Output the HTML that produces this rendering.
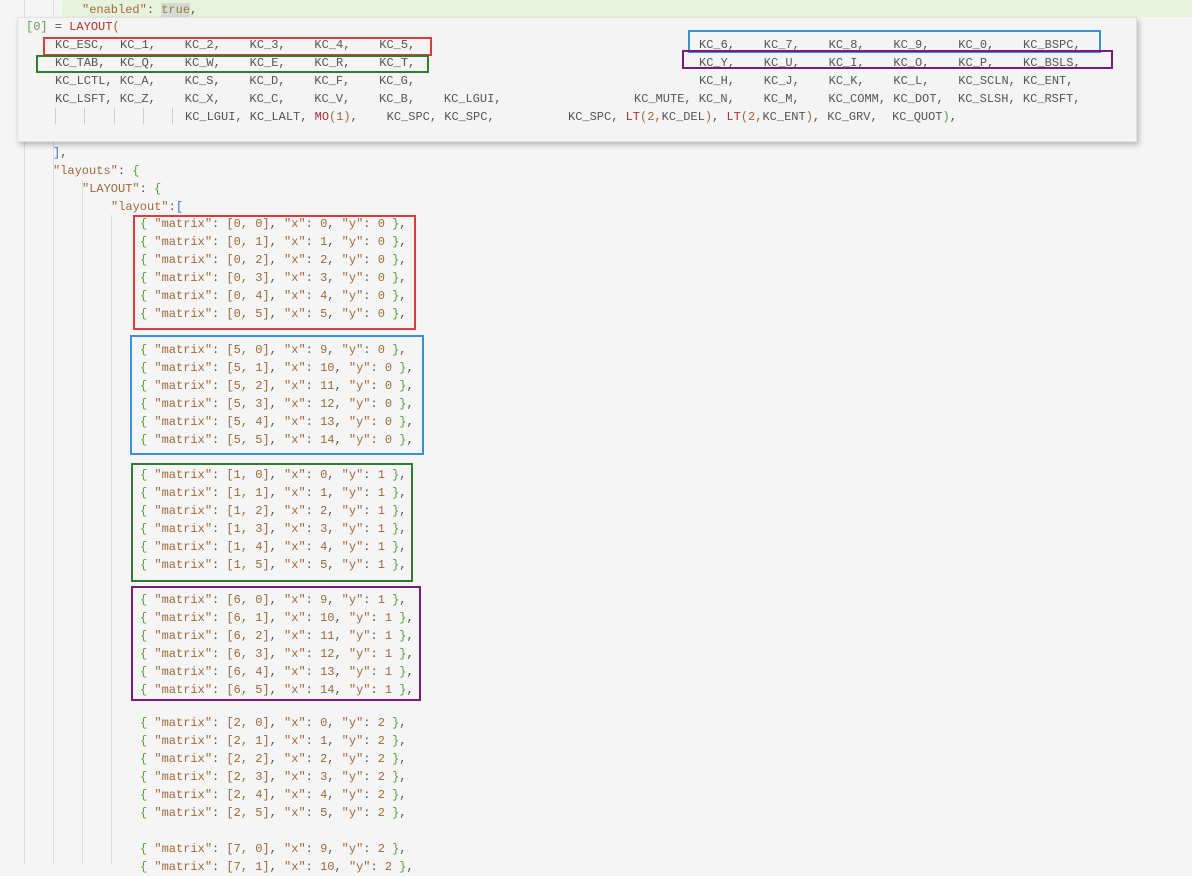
<!DOCTYPE html>
<html><head><meta charset="utf-8"><style>
*{margin:0;padding:0;box-sizing:border-box}
body{width:1192px;height:864px;background:#f5f5f5;position:relative;overflow:hidden;font-family:"Liberation Mono",monospace;}
.t{position:absolute;white-space:pre;font-size:12px;line-height:18px;color:#555}
.p{position:absolute;white-space:pre;font-size:12px;line-height:18px;color:#555}
.g{position:absolute;width:1px;background:#dcdcdc}
.s{color:#a0683a}.n{color:#9a6a3a}.b{color:#5b9a3c}.r{color:#b0302a}.bl{color:#3a6ad0}
.box{position:absolute;border:2.5px solid}
</style></head><body>
<div style="position:absolute;left:62px;top:0;width:1130px;height:17px;background:#e6f2dc"></div>
<div class="g" style="left:24px;top:0;height:864px"></div>
<div class="g" style="left:53px;top:0;height:864px"></div>
<div class="g" style="left:82px;top:180px;height:684px"></div>
<div class="g" style="left:111px;top:215px;height:649px"></div>
<div class="t" style="left:82px;top:1px"><span class="s">"enabled"</span>: <span style="background:#d8dcd0;color:#8a7a4a">true</span>,</div>
<div class="t" style="left:53px;top:144px"><span class="bl">]</span>,</div>
<div class="t" style="left:53px;top:162px"><span class="s">"layouts"</span>: <span class="b">{</span></div>
<div class="t" style="left:82px;top:180px"><span class="s">"LAYOUT"</span>: <span class="b">{</span></div>
<div class="t" style="left:111px;top:198px"><span class="s">"layout"</span>:<span class="bl">[</span></div>

<div style="position:absolute;left:17px;top:17px;width:1120px;height:125px;background:#f4f4f4;border:1px solid #e2e2e2;box-shadow:2px 3px 5px rgba(0,0,0,0.25)"></div>
<div class="g" style="left:55px;top:108px;height:16px;background:#ccc"></div>
<div class="g" style="left:84px;top:108px;height:16px;background:#ccc"></div>
<div class="g" style="left:114px;top:108px;height:16px;background:#ccc"></div>
<div class="g" style="left:143px;top:108px;height:16px;background:#ccc"></div>
<div class="g" style="left:172px;top:108px;height:16px;background:#ccc"></div>
<div class="p" style="left:26px;top:18px"><span style="color:#6a9a5a">[0]</span> = <span class="r">LAYOUT</span><span class="s">(</span></div>
<div class="p" style="left:55px;top:36px">KC_ESC,</div><div class="p" style="left:120px;top:36px">KC_1,    KC_2,    KC_3,    KC_4,    KC_5,</div>
<div class="p" style="left:55px;top:54px">KC_TAB,</div><div class="p" style="left:120px;top:54px">KC_Q,    KC_W,    KC_E,    KC_R,    KC_T,</div>
<div class="p" style="left:55px;top:72px">KC_LCTL, KC_A,    KC_S,    KC_D,    KC_F,    KC_G,</div>
<div class="p" style="left:55px;top:90px">KC_LSFT, KC_Z,    KC_X,    KC_C,    KC_V,    KC_B,    KC_LGUI,</div>
<div class="p" style="left:185px;top:108px">KC_LGUI, KC_LALT, <span class="r">MO</span><span class="s">(1)</span>,    KC_SPC, KC_SPC,</div>
<div class="p" style="left:699px;top:36px">KC_6,    KC_7,    KC_8,    KC_9,    KC_0,    KC_BSPC,</div>
<div class="p" style="left:699px;top:54px">KC_Y,    KC_U,    KC_I,    KC_O,    KC_P,    KC_BSLS,</div>
<div class="p" style="left:699px;top:72px">KC_H,    KC_J,    KC_K,    KC_L,    KC_SCLN, KC_ENT,</div>
<div class="p" style="left:634px;top:90px">KC_MUTE, KC_N,    KC_M,    KC_COMM, KC_DOT,  KC_SLSH, KC_RSFT,</div>
<div class="p" style="left:568px;top:108px">KC_SPC, <span class="r">LT</span><span class="s">(2,</span>KC_DEL<span class="s">)</span>, <span class="r">LT</span><span class="s">(2,</span>KC_ENT<span class="s">)</span>, KC_GRV,  KC_QUOT<span class="b">)</span>,</div>
<div class="box" style="left:43px;top:37px;width:389px;height:19px;border-color:#e03a3a"></div>
<div class="box" style="left:36px;top:55px;width:393px;height:18px;border-color:#2e7d32"></div>
<div class="box" style="left:688px;top:30px;width:413px;height:23px;border-color:#3a90d8"></div>
<div class="box" style="left:682px;top:50px;width:431px;height:19px;border-color:#7a1a7a"></div>

<div id="m"></div>
<div class="box" style="left:133px;top:215px;width:283px;height:115px;border-color:#e03a3a"></div>
<div class="box" style="left:130px;top:335px;width:294px;height:120px;border-color:#3a90d8"></div>
<div class="box" style="left:131px;top:463px;width:282px;height:119px;border-color:#2e7d32"></div>
<div class="box" style="left:131px;top:586px;width:290px;height:115px;border-color:#7a1a7a"></div>
<script>
var groups=[[215,0,[0,1,2,3,4,5],0],[341,5,[9,10,11,12,13,14],0],[466,1,[0,1,2,3,4,5],1],[591,6,[9,10,11,12,13,14],1],[714,2,[0,1,2,3,4,5],2],[840,7,[9,10,11,12,13,14],2]];
var h='';
groups.forEach(function(g){for(var i=0;i<6;i++){var y=g[0]+i*18;if(y>864)break;
h+='<div class="t" style="left:140px;top:'+y+'px"><span class="b">{</span> <span class="s">"matrix"</span>: <span class="n">['+g[1]+', '+i+']</span>, <span class="s">"x"</span>: <span class="n">'+g[2][i]+'</span>, <span class="s">"y"</span>: <span class="n">'+g[3]+'</span> <span class="b">}</span>,</div>';}});
document.getElementById('m').innerHTML=h;
</script>
</body></html>
